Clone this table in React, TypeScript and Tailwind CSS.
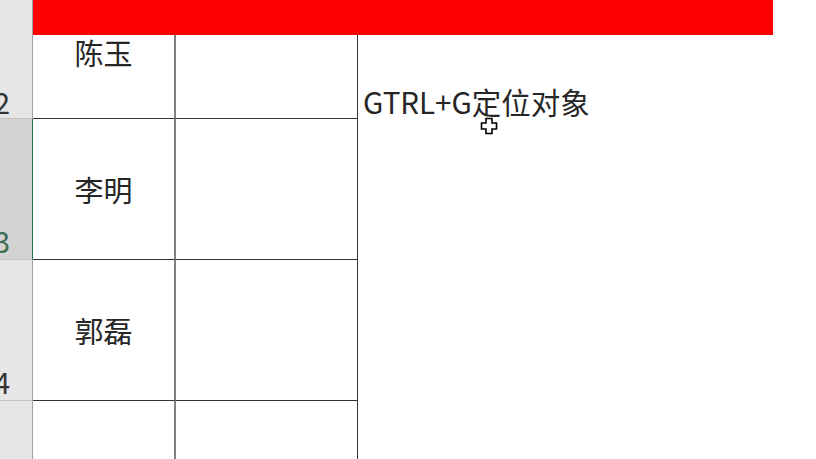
const FONT = "font-['Noto_Sans_CJK_SC','Noto_Sans',sans-serif]";

type Row = { num: string; name: string; h: string };

const ROWS: Row[] = [
  { num: '3', name: '李明', h: 'h-[141px]' },
  { num: '4', name: '郭磊', h: 'h-[141px]' },
];

function CellCursor() {
  return (
    <svg
      className="absolute left-[480px] top-[117px]"
      width="18"
      height="18"
      viewBox="0 0 18 18"
    >
      <path
        d="M6 1.5h6v4.5h4.5v6H12v4.5H6V12H1.5V6H6z"
        fill="#fff"
        stroke="#000"
        strokeWidth="1.6"
        strokeLinejoin="miter"
      />
    </svg>
  );
}

export default function App() {
  return (
    <div className={`relative flex w-[816px] h-[459px] overflow-hidden bg-white text-[#262626] ${FONT}`}>
      {/* row headers */}
      <div className="flex flex-col w-[33px] shrink-0 bg-[#e6e6e6] overflow-hidden">
        <div className="h-[35px] shrink-0 border-r border-[#a3a3a3]" />
        <div className="h-[84px] shrink-0 relative border-b border-b-[#c4c4c4] border-r border-r-[#a3a3a3]">
          <span className="absolute left-[-6px] bottom-[2px] text-[29px] leading-none text-[#333]">2</span>
        </div>
        <div className="h-[141px] shrink-0 relative bg-[#d3d3d3] border-b border-b-[#c4c4c4] border-r border-r-[#217346]">
          <span className="absolute left-[-6px] bottom-[4px] text-[29px] leading-none text-[#3f6f55]">3</span>
        </div>
        <div className="h-[141px] shrink-0 relative border-b border-b-[#c4c4c4] border-r border-r-[#a3a3a3]">
          <span className="absolute left-[-6px] bottom-[4px] text-[29px] leading-none text-[#333]">4</span>
        </div>
        <div className="flex-1 border-r border-[#a3a3a3]" />
      </div>

      {/* sheet */}
      <div className="flex flex-col flex-1">
        <div className="h-[35px] w-[740px] shrink-0 bg-[#ff0000]" />

        <div className="flex h-[84px] shrink-0">
          <div className="w-[143px] border-r-2 border-r-[#808080] border-b border-b-[#333] flex justify-center">
            <span className="text-[29px] leading-[34px]">陈玉</span>
          </div>
          <div className="w-[182px] border-r border-r-[#333] border-b border-b-[#333]" />
          <div className="flex-1 flex items-end pl-[5px] pb-[1px]">
            <span className="text-[29.5px] leading-[34px] whitespace-nowrap">GTRL+G定位对象</span>
          </div>
        </div>

        {ROWS.map((r) => (
          <div key={r.num} className={`flex ${r.h} shrink-0`}>
            <div className="w-[143px] border-r-2 border-r-[#808080] border-b border-b-[#333] flex items-center justify-center">
              <span className="text-[29px] leading-none">{r.name}</span>
            </div>
            <div className="w-[182px] border-r border-r-[#333] border-b border-b-[#333]" />
            <div className="flex-1" />
          </div>
        ))}

        <div className="flex flex-1">
          <div className="w-[143px] border-r-2 border-r-[#808080]" />
          <div className="w-[182px] border-r border-r-[#333]" />
          <div className="flex-1" />
        </div>
      </div>

      <CellCursor />
    </div>
  );
}
